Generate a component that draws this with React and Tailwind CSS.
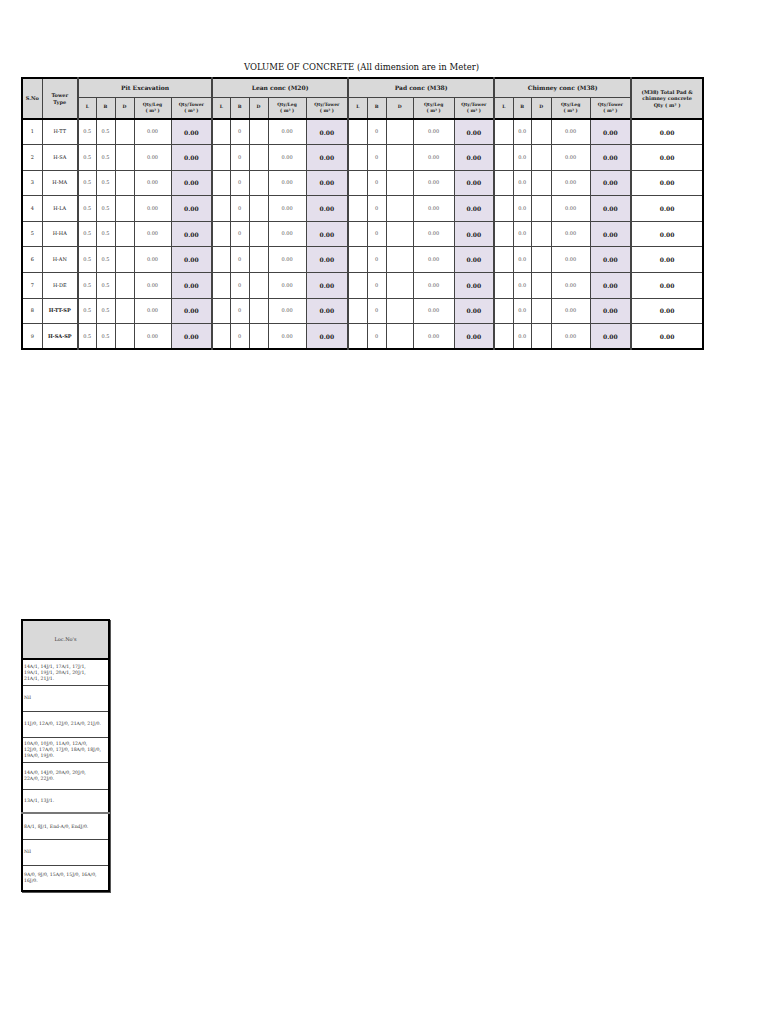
const cols = [20, 36, 18, 19, 19, 37, 41, 18, 19, 19, 38, 42, 19, 19, 27, 41, 40, 19, 18, 20, 39, 41, 72];

const groups = ['Pit Excavation', 'Lean conc (M20)', 'Pad conc (M38)', 'Chimney conc (M38)'];

const towers = ['H-TT', 'H-SA', 'H-MA', 'H-LA', 'H-HA', 'H-AN', 'H-DE', 'H-TT-SP', 'H-SA-SP'];

const groupValues = [
  ['0.5', '0.5', ''],
  ['', '0', ''],
  ['', '0', ''],
  ['', '0.0', ''],
];

// line breaks as they wrap in the sheet
const locRows = [
  { lines: ['14A/1, 14J/1, 17A/1, 17J/1,', '19A/1, 19J/1, 20A/1, 20J/1,', '21A/1, 21J/1.'], h: 'h-[26px]' },
  { lines: ['Nil'], h: 'h-[26px]' },
  { lines: ['11J/0, 12A/0, 12J/0, 21A/0, 21J/0.'], h: 'h-[26px]' },
  { lines: ['10A/0, 10J/0, 11A/0, 12A/0,', '12J/0, 17A/0, 17J/0, 18A/0, 18J/0,', '19A/0, 19J/0.'], h: 'h-[25px]' },
  { lines: ['14A/0, 14J/0, 20A/0, 20J/0,', '22A/0, 22J/0.'], h: 'h-[27px]' },
  { lines: ['13A/1, 13J/1.'], h: 'h-[24px]' },
  { lines: ['8A/1, 8J/1, End-A/0, EndJ/0.'], h: 'h-[26px]', thick: true },
  { lines: ['Nil'], h: 'h-[26px]' },
  { lines: ['9A/0, 9J/0, 15A/0, 15J/0, 16A/0,', '16J/0.'], h: 'h-[26px]' },
];

function GroupCells({ vals }) {
  return (
    <>
      <td className="border border-l-2 border-[#444] text-center text-[5px] text-[#555]">{vals[0]}</td>
      <td className="border border-[#444] text-center text-[5px] text-[#555]">{vals[1]}</td>
      <td className="border border-[#444] text-center text-[5px] text-[#555]">{vals[2]}</td>
      <td className="border border-[#444] text-center text-[5px] text-[#555]">0.00</td>
      <td className="border border-[#444] bg-[#e4dfec] text-center text-[6px] font-bold text-[#222]">0.00</td>
    </>
  );
}

function HeaderCells() {
  return (
    <>
      <th className="border border-l-2 border-[#444] text-[4.5px] font-bold">L</th>
      <th className="border border-[#444] text-[4.5px] font-bold">B</th>
      <th className="border border-[#444] text-[4.5px] font-bold">D</th>
      <th className="border border-[#444] text-[4.5px] font-bold leading-tight">
        Qty/Leg
        <br />( m³ )
      </th>
      <th className="border border-[#444] text-[4.5px] font-bold leading-tight">
        Qty/Tower
        <br />( m³ )
      </th>
    </>
  );
}

export default function App() {
  return (
    <div className="w-[768px] h-[1024px] bg-white pt-[60px] font-['DejaVu_Serif',serif] text-[#222]">
      <div className="ml-[21px] w-[681px]">
        <h1 className="text-center text-[8.5px] leading-[14px] text-[#111]">
          VOLUME OF CONCRETE (All dimension are in Meter)
        </h1>

        <table className="mt-[3px] w-[681px] table-fixed border-collapse border-2 border-black">
          <colgroup>
            {cols.map((w, i) => (
              <col key={i} style={{ width: w }} />
            ))}
          </colgroup>
          <thead>
            <tr className="h-[19px] bg-[#d9d9d9]">
              <th rowSpan={2} className="border border-[#444] text-[5px] font-bold leading-tight">S.No</th>
              <th rowSpan={2} className="border border-[#444] text-[5px] font-bold leading-tight">
                Tower
                <br />
                Type
              </th>
              {groups.map((g) => (
                <th key={g} colSpan={5} className="border border-l-2 border-[#444] text-[6px] font-bold">
                  {g}
                </th>
              ))}
              <th rowSpan={2} className="border border-l-2 border-[#444] px-1 text-[5px] font-bold leading-[1.25]">
                (M38) Total Pad &amp;
                <br />
                chimney concrete
                <br />
                Qty ( m³ )
              </th>
            </tr>
            <tr className="h-[22px] border-b-2 border-black bg-[#d9d9d9]">
              {groups.map((g) => (
                <HeaderCells key={g} />
              ))}
            </tr>
          </thead>
          <tbody>
            {towers.map((t, i) => (
              <tr key={t} className="h-[25.6px]">
                <td className="border border-[#444] text-center text-[5px]">{i + 1}</td>
                <td className={`border border-[#444] text-center text-[5px] ${i > 6 ? 'font-bold' : ''}`}>{t}</td>
                {groupValues.map((v, j) => (
                  <GroupCells key={j} vals={v} />
                ))}
                <td className="border border-l-2 border-[#444] text-center text-[6px] font-bold">0.00</td>
              </tr>
            ))}
          </tbody>
        </table>

        {/* Loc numbers */}
        <table className="mt-[269px] w-[89px] table-fixed border-collapse border-2 border-black shadow-[1px_1px_0_#555]">
          <thead>
            <tr className="h-[39px] border-b-2 border-black bg-[#d9d9d9]">
              <th className="text-center text-[5px] font-normal text-[#333]">Loc.No's</th>
            </tr>
          </thead>
          <tbody>
            {locRows.map((r, i) => (
              <tr key={i} className={r.h}>
                <td
                  className={`overflow-hidden border-[#444] px-[1px] text-left text-[4.6px] leading-[1.3] whitespace-nowrap text-[#333] ${
                    r.thick ? 'border-t-2 border-t-[#777]' : 'border-t'
                  }`}
                >
                  {r.lines.map((l, k) => (
                    <div key={k}>{l}</div>
                  ))}
                </td>
              </tr>
            ))}
          </tbody>
        </table>
      </div>
    </div>
  );
}
